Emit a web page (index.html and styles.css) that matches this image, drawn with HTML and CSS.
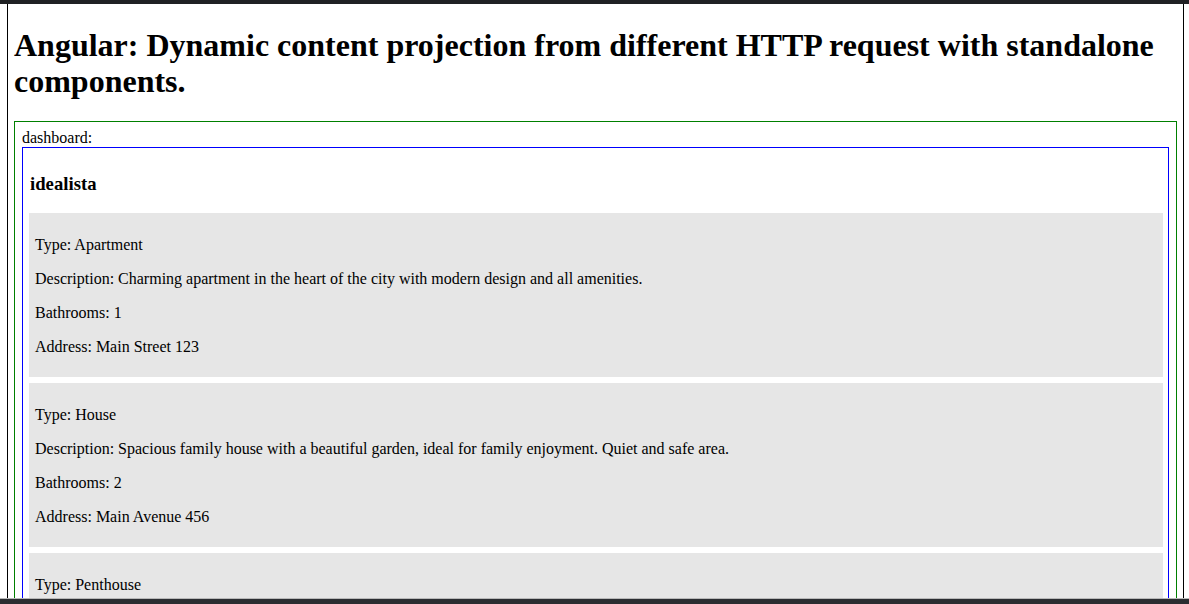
FILE: index.html
```html
<!DOCTYPE html>
<html lang="en">
<head>
<meta charset="utf-8">
<title>Angular dynamic content projection</title>
<link rel="stylesheet" href="styles.css">
</head>
<body>
<div class="topbar"></div>
<div class="frame">
  <h1 class="title">Angular: Dynamic content projection from different HTTP request with standalone components.</h1>
  <div class="dashboard">
    <div class="dash-label">dashboard:</div>
    <div class="provider">
      <h3 class="provider-name">idealista</h3>
      <div class="card">
        <p>Type: Apartment</p>
        <p>Description: Charming apartment in the heart of the city with modern design and all amenities.</p>
        <p>Bathrooms: 1</p>
        <p>Address: Main Street 123</p>
      </div>
      <div class="card">
        <p>Type: House</p>
        <p>Description: Spacious family house with a beautiful garden, ideal for family enjoyment. Quiet and safe area.</p>
        <p>Bathrooms: 2</p>
        <p>Address: Main Avenue 456</p>
      </div>
      <div class="card">
        <p>Type: Penthouse</p>
        <p>Description: Luxury penthouse with panoramic views of the city.</p>
        <p>Bathrooms: 3</p>
        <p>Address: Central Plaza 789</p>
      </div>
    </div>
  </div>
</div>
<div class="bottombar"></div>
</body>
</html>
```
FILE: styles.css
```css
html, body {
  margin: 0;
  padding: 0;
  height: 100%;
  overflow: hidden;
  background: #ffffff;
}
body {
  font-family: "Liberation Serif", "Times New Roman", serif;
  color: #000;
  font-size: 16px;
}
.topbar {
  height: 4px;
  background: #202124;
}
.frame {
  margin: 0 5px 0 7px;
  border-left: 1px solid #000;
  border-right: 1px solid #000;
  padding: 0 6px;
  min-height: 100%;
}
.title {
  font-size: 32px;
  font-weight: bold;
  margin: 0;
  padding: 23px 0 22px 0;
  line-height: 36px;
}
.dashboard {
  border: 1px solid green;
  padding: 0 7px 7px 7px;
}
.dash-label {
  padding-top: 7px;
  line-height: 18px;
  height: 18px;
  font-size: 16px;
}
.provider {
  border: 1px solid blue;
  padding: 6px 5px 6px 6px;
}
.provider-name {
  font-size: 18.72px;
  font-weight: bold;
  margin: 18.5px 0 18.5px 1px;
  line-height: 22px;
}
.card {
  background: #e6e6e6;
  padding: 7px 6px 5px 6px;
  margin-bottom: 6px;
  font-size: 16px;
}
.card p {
  margin: 16px 0;
  line-height: 18px;
}
.bottombar {
  position: fixed;
  left: 0;
  right: 0;
  bottom: 0;
  height: 5px;
  background: #2b2d31;
  border-top: 1px solid #b8b8b8;
}
```
